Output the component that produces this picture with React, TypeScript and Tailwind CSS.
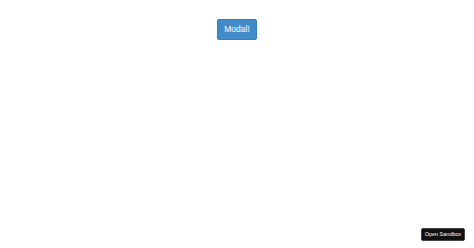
export default function App() {
  return (
    <div className="relative h-[248px] w-full bg-white font-['Liberation_Sans',Arial,sans-serif]">
      <div className="flex justify-center pt-[19px]">
        <button className="flex h-[21px] w-[40px] items-center justify-center rounded-[2px] border border-[#357ebd] bg-[#428bca] text-[8.5px] text-white">
          Modal!
        </button>
      </div>

      {/* sandbox badge */}
      <div className="fixed bottom-[7px] right-[9px] flex h-[13px] w-[44px] items-center justify-center rounded-[2px] border border-[#444] bg-[#111] text-[5.5px] text-white">
        Open Sandbox
      </div>
    </div>
  );
}
